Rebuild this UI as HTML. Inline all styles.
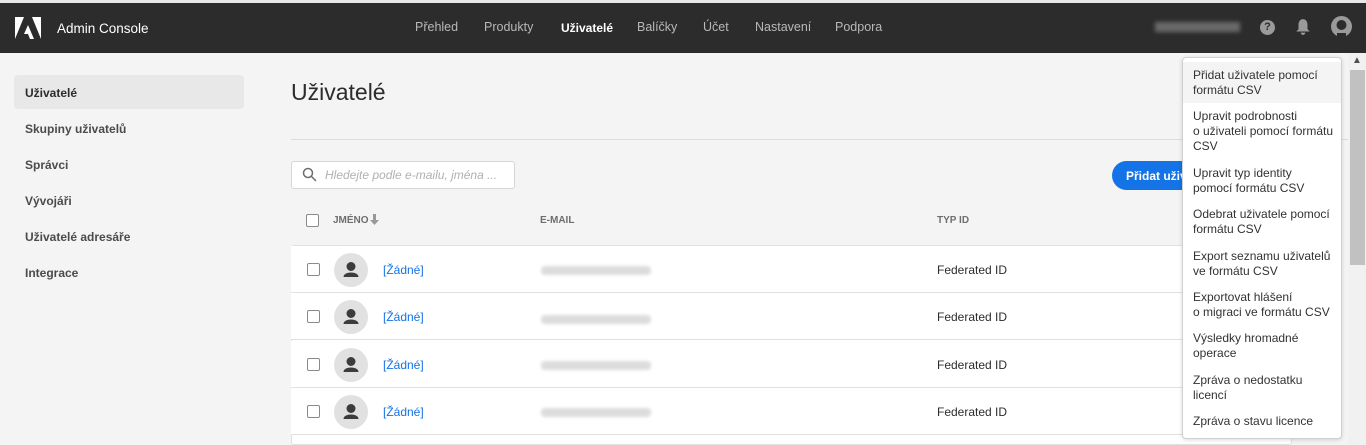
<!DOCTYPE html>
<html><head><meta charset="utf-8"><style>
*{margin:0;padding:0;box-sizing:border-box}
body{width:1366px;height:445px;overflow:hidden;background:#f4f4f4;font-family:"Liberation Sans","DejaVu Sans",sans-serif;position:relative}
.hdr{position:absolute;left:0;top:3px;width:1366px;height:50px;background:#2c2c2c;color:#fff}
.top{position:absolute;left:0;top:0;width:1366px;height:3px;background:#e8e8e8}
.nav{position:absolute;top:17px;font-size:12.5px;color:#b8b8b8}
.a{position:absolute}
.side{position:absolute;left:25px;font-size:12px;font-weight:bold;color:#4b4b4b}
.ddi{position:absolute;left:1193px;font-size:12px;line-height:15px;color:#323232}
.row{position:absolute;left:291px;width:1001px;height:47px;background:#fff;border-bottom:1px solid #e1e1e1}
.cb{position:absolute;width:13px;height:13px;border:1px solid #8a8a8a;border-radius:2px;background:#fff}
.av{position:absolute;left:43px;top:7px;width:34px;height:34px;border-radius:50%;background:#e1e1e1}
.blur{position:absolute;height:9px;background:#dcdcdc;border-radius:4px;filter:blur(1.5px)}
</style></head><body>
<div class="top"></div>
<div class="hdr">
 <svg class="a" style="left:15px;top:14px" width="26" height="22" viewBox="0 0 26 22"><path d="M0 22L9 0H0z M17 0h9v22z M13 8l6 14h-4l-2-5h-4z" fill="#fff"/></svg>
 <div class="a" style="left:57px;top:18px;font-size:13.5px">Admin Console</div>
 <div class="nav" style="left:415px">Přehled</div>
 <div class="nav" style="left:484px">Produkty</div>
 <div class="nav" style="left:561px;color:#fff;font-weight:bold;font-size:12px;top:18px">Uživatelé</div>
 <div class="nav" style="left:637px">Balíčky</div>
 <div class="nav" style="left:703px">Účet</div>
 <div class="nav" style="left:755px">Nastavení</div>
 <div class="nav" style="left:835px">Podpora</div>
 <div class="a" style="left:1155px;top:19px;width:85px;height:10px;background:#6a6a6a;filter:blur(2px)"></div>
 <div class="a" style="left:1260px;top:17px;width:15px;height:15px;border-radius:50%;background:#9a9a9a;color:#2c2c2c;font-size:11px;font-weight:bold;text-align:center;line-height:15px">?</div>
 <svg class="a" style="left:1295px;top:15px" width="16" height="18" viewBox="0 0 14 16"><path d="M7 1C4 1 3 4 3 6v4L1 12h12l-2-2V6c0-2-1-5-4-5zM5 13h4a2 2 0 0 1-4 0z" fill="#9a9a9a"/></svg>
 <svg class="a" style="left:1331px;top:13px" width="21" height="21" viewBox="0 0 21 21"><circle cx="10.5" cy="10.5" r="10.5" fill="#9a9a9a"/><circle cx="10.5" cy="9" r="5" fill="#2c2c2c"/><path d="M6 21v-4h9v4z" fill="#2c2c2c"/></svg>
</div>
<div class="a" style="left:14px;top:75px;width:230px;height:34px;background:#e8e8e8;border-radius:4px"></div>
<div class="side" style="top:86px;color:#2c2c2c">Uživatelé</div>
<div class="side" style="top:122px">Skupiny uživatelů</div>
<div class="side" style="top:158px">Správci</div>
<div class="side" style="top:194px">Vývojáři</div>
<div class="side" style="top:230px">Uživatelé adresáře</div>
<div class="side" style="top:266px">Integrace</div>
<div class="a" style="left:291px;top:79px;font-size:23px;color:#2c2c2c;font-weight:300">Uživatelé</div>
<div class="a" style="left:291px;top:139px;width:1060px;height:1px;background:#dcdcdc"></div>
<div class="a" style="left:291px;top:161px;width:224px;height:28px;background:#fff;border:1px solid #d6d6d6;border-radius:3px"></div>
<svg class="a" style="left:302px;top:167px" width="15" height="15" viewBox="0 0 15 15"><circle cx="6" cy="6" r="4.5" fill="none" stroke="#6e6e6e" stroke-width="1.5"/><path d="M9.5 9.5L14 14" stroke="#6e6e6e" stroke-width="1.5"/></svg>
<div class="a" style="left:325px;top:168px;font-size:12px;font-style:italic;color:#b0b0b0">Hledejte podle e-mailu, jména ...</div>
<div class="a" style="left:1112px;top:161px;width:90px;height:29px;background:#1473e6;border-radius:15px;color:#fff;font-weight:bold;font-size:12px;padding:8px 14px">Přidat uživ</div>
<div class="cb" style="left:306px;top:214px"></div>
<div class="a" style="left:333px;top:215px;font-size:10px;font-weight:bold;color:#6e6e6e">JMÉNO</div>
<svg class="a" style="left:370px;top:214px" width="9" height="11" viewBox="0 0 9 11"><path d="M3 0h3v6h3L4.5 11 0 6h3z" fill="#999"/></svg>
<div class="a" style="left:540px;top:215px;font-size:10px;font-weight:bold;color:#6e6e6e">E-MAIL</div>
<div class="a" style="left:937px;top:215px;font-size:10px;font-weight:bold;color:#6e6e6e">TYP ID</div>
<div class="a" style="left:291px;top:245px;width:1001px;height:200px;border:1px solid #e1e1e1;background:#fff;border-radius:3px"></div>
<div class="row" style="top:246px"><div class="cb" style="left:16px;top:17px"></div><div class="av"><svg width="34" height="34"><circle cx="17" cy="13.5" r="4.5" fill="#3c3c3c"/><path d="M9.5 24c0-6 15-6 15 0z" fill="#3c3c3c"/></svg></div><div class="a" style="left:92px;top:17px;font-size:12px;color:#1473e6">[Žádné]</div><div class="blur" style="left:250px;top:20px;width:110px"></div><div class="a" style="left:646px;top:17px;font-size:12px;color:#2c2c2c">Federated ID</div></div>
<div class="row" style="top:293px"><div class="cb" style="left:16px;top:17px"></div><div class="av"><svg width="34" height="34"><circle cx="17" cy="13.5" r="4.5" fill="#3c3c3c"/><path d="M9.5 24c0-6 15-6 15 0z" fill="#3c3c3c"/></svg></div><div class="a" style="left:92px;top:17px;font-size:12px;color:#1473e6">[Žádné]</div><div class="blur" style="left:250px;top:22px;width:110px"></div><div class="a" style="left:646px;top:17px;font-size:12px;color:#2c2c2c">Federated ID</div></div>
<div class="row" style="top:341px"><div class="cb" style="left:16px;top:17px"></div><div class="av"><svg width="34" height="34"><circle cx="17" cy="13.5" r="4.5" fill="#3c3c3c"/><path d="M9.5 24c0-6 15-6 15 0z" fill="#3c3c3c"/></svg></div><div class="a" style="left:92px;top:17px;font-size:12px;color:#1473e6">[Žádné]</div><div class="blur" style="left:250px;top:20px;width:110px"></div><div class="a" style="left:646px;top:17px;font-size:12px;color:#2c2c2c">Federated ID</div></div>
<div class="row" style="top:388px"><div class="cb" style="left:16px;top:17px"></div><div class="av"><svg width="34" height="34"><circle cx="17" cy="13.5" r="4.5" fill="#3c3c3c"/><path d="M9.5 24c0-6 15-6 15 0z" fill="#3c3c3c"/></svg></div><div class="a" style="left:92px;top:17px;font-size:12px;color:#1473e6">[Žádné]</div><div class="blur" style="left:250px;top:20px;width:110px"></div><div class="a" style="left:646px;top:17px;font-size:12px;color:#2c2c2c">Federated ID</div></div>
<div class="a" style="left:1348px;top:53px;width:18px;height:392px;background:#f1f1f1"></div>
<div class="a" style="left:1350px;top:70px;width:15px;height:195px;background:#c1c1c1"></div>
<div class="a" style="left:1352px;top:55px;font-size:10px;color:#505050">&#9650;</div>
<div class="a" style="left:1182px;top:57px;width:160px;height:382px;background:#fff;border:1px solid #d0d0d0;border-radius:4px;box-shadow:0 1px 4px rgba(0,0,0,.15)"></div>
<div class="a" style="left:1183px;top:62px;width:158px;height:41px;background:#f4f4f4"></div>
<div class="ddi" style="top:68px">Přidat uživatele pomocí<br>formátu CSV</div>
<div class="ddi" style="top:109px">Upravit podrobnosti<br>o uživateli pomocí formátu<br>CSV</div>
<div class="ddi" style="top:166px">Upravit typ identity<br>pomocí formátu CSV</div>
<div class="ddi" style="top:207px">Odebrat uživatele pomocí<br>formátu CSV</div>
<div class="ddi" style="top:249px">Export seznamu uživatelů<br>ve formátu CSV</div>
<div class="ddi" style="top:290px">Exportovat hlášení<br>o migraci ve formátu CSV</div>
<div class="ddi" style="top:331px">Výsledky hromadné<br>operace</div>
<div class="ddi" style="top:373px">Zpráva o nedostatku<br>licencí</div>
<div class="ddi" style="top:414px">Zpráva o stavu licence</div>
</body></html>
